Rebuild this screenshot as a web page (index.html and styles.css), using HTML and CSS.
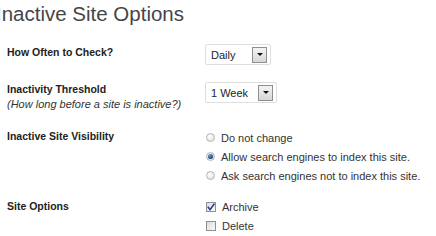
FILE: index.html
```html
<!DOCTYPE html>
<html>
<head>
<meta charset="utf-8">
<link rel="stylesheet" href="styles.css">
</head>
<body>
<h2 class="title">Inactive Site Options</h2>
<div class="form">
  <div class="row row-check">
    <div class="label">How Often to Check?</div>
    <div class="field">
      <div class="select s1"><span class="val">Daily</span><span class="btn"><span class="tri"></span></span></div>
    </div>
  </div>
  <div class="row row-threshold">
    <div class="label">Inactivity Threshold<div class="desc">(How long before a site is inactive?)</div></div>
    <div class="field">
      <div class="select s2"><span class="val">1 Week</span><span class="btn"><span class="tri"></span></span></div>
    </div>
  </div>
  <div class="row row-vis">
    <div class="label">Inactive Site Visibility</div>
    <div class="field opts">
      <div class="opt"><span class="radio"></span>Do not change</div>
      <div class="opt"><span class="radio on"></span>Allow search engines to index this site.</div>
      <div class="opt"><span class="radio"></span>Ask search engines not to index this site.</div>
    </div>
  </div>
  <div class="row row-site">
    <div class="label">Site Options</div>
    <div class="field opts checks">
      <div class="opt"><span class="check on"><svg width="8" height="8" viewBox="0 0 8 8"><path d="M0.8 3.6 L3 6.6 L7.4 0.6" fill="none" stroke="#27399a" stroke-width="1.6"/></svg></span>Archive</div>
      <div class="opt"><span class="check"></span>Delete</div>
    </div>
  </div>
</div>
</body>
</html>
```
FILE: styles.css
```css
html, body {
  margin: 0;
  padding: 0;
  background: #fff;
}
body {
  font-family: "Liberation Sans", Arial, sans-serif;
  color: #333;
}
.title {
  margin: 0 0 0 -4px;
  font-size: 20.5px;
  line-height: 27px;
  font-weight: normal;
  color: #464646;
}
.form {
  padding-left: 7px;
}
.row {
  display: grid;
  grid-template-columns: 198px auto;
}
.row-check { margin-top: 17px; }
.row-threshold { margin-top: 17px; }
.row-vis { margin-top: 16px; }
.row-site { margin-top: 13px; }
.label {
  font-size: 10.5px;
  line-height: 16px;
  font-weight: bold;
  color: #222;
}
.row-threshold .label { line-height: 15px; }
.desc {
  font-weight: normal;
  font-style: italic;
  font-size: 11px;
  line-height: 15px;
  color: #333;
}
.select {
  display: flex;
  align-items: center;
  box-sizing: border-box;
  height: 21px;
  border: 1px solid #dedede;
  border-radius: 2px;
  padding-left: 5px;
  padding-right: 3px;
  font-size: 11px;
  color: #222;
  background: #fff;
}
.s1 { width: 66px; }
.s2 { width: 72px; }
.val { flex: 1; }
.btn {
  box-sizing: border-box;
  width: 15px;
  height: 16px;
  border: 1px solid #8e8e8e;
  background: linear-gradient(#f4f4f4, #d6d6d6);
  display: flex;
  align-items: center;
  justify-content: center;
}
.tri {
  width: 0;
  height: 0;
  border-left: 3px solid transparent;
  border-right: 3px solid transparent;
  border-top: 3px solid #111;
}
.opts {
  font-size: 11px;
  color: #333;
}
.opt {
  display: flex;
  align-items: center;
  height: 19px;
}
.checks .opt { height: 18.6px; }
.radio {
  box-sizing: border-box;
  width: 9px;
  height: 9px;
  border-radius: 50%;
  border: 1px solid #b4b4b4;
  background: radial-gradient(circle at 40% 35%, #fff, #dcdcdc);
  margin: 0 6px 0 1px;
  display: flex;
  align-items: center;
  justify-content: center;
}
.radio.on::after {
  content: "";
  width: 5px;
  height: 5px;
  border-radius: 50%;
  background: radial-gradient(circle at 40% 35%, #6aa6d8, #163d6e 70%);
}
.check {
  box-sizing: border-box;
  width: 10px;
  height: 10px;
  border: 1px solid #909090;
  background: linear-gradient(135deg, #dcdcdc, #fafafa);
  margin: 0 6px 0 1px;
  display: flex;
  align-items: center;
  justify-content: center;
}
.check svg { display: block; }
```
